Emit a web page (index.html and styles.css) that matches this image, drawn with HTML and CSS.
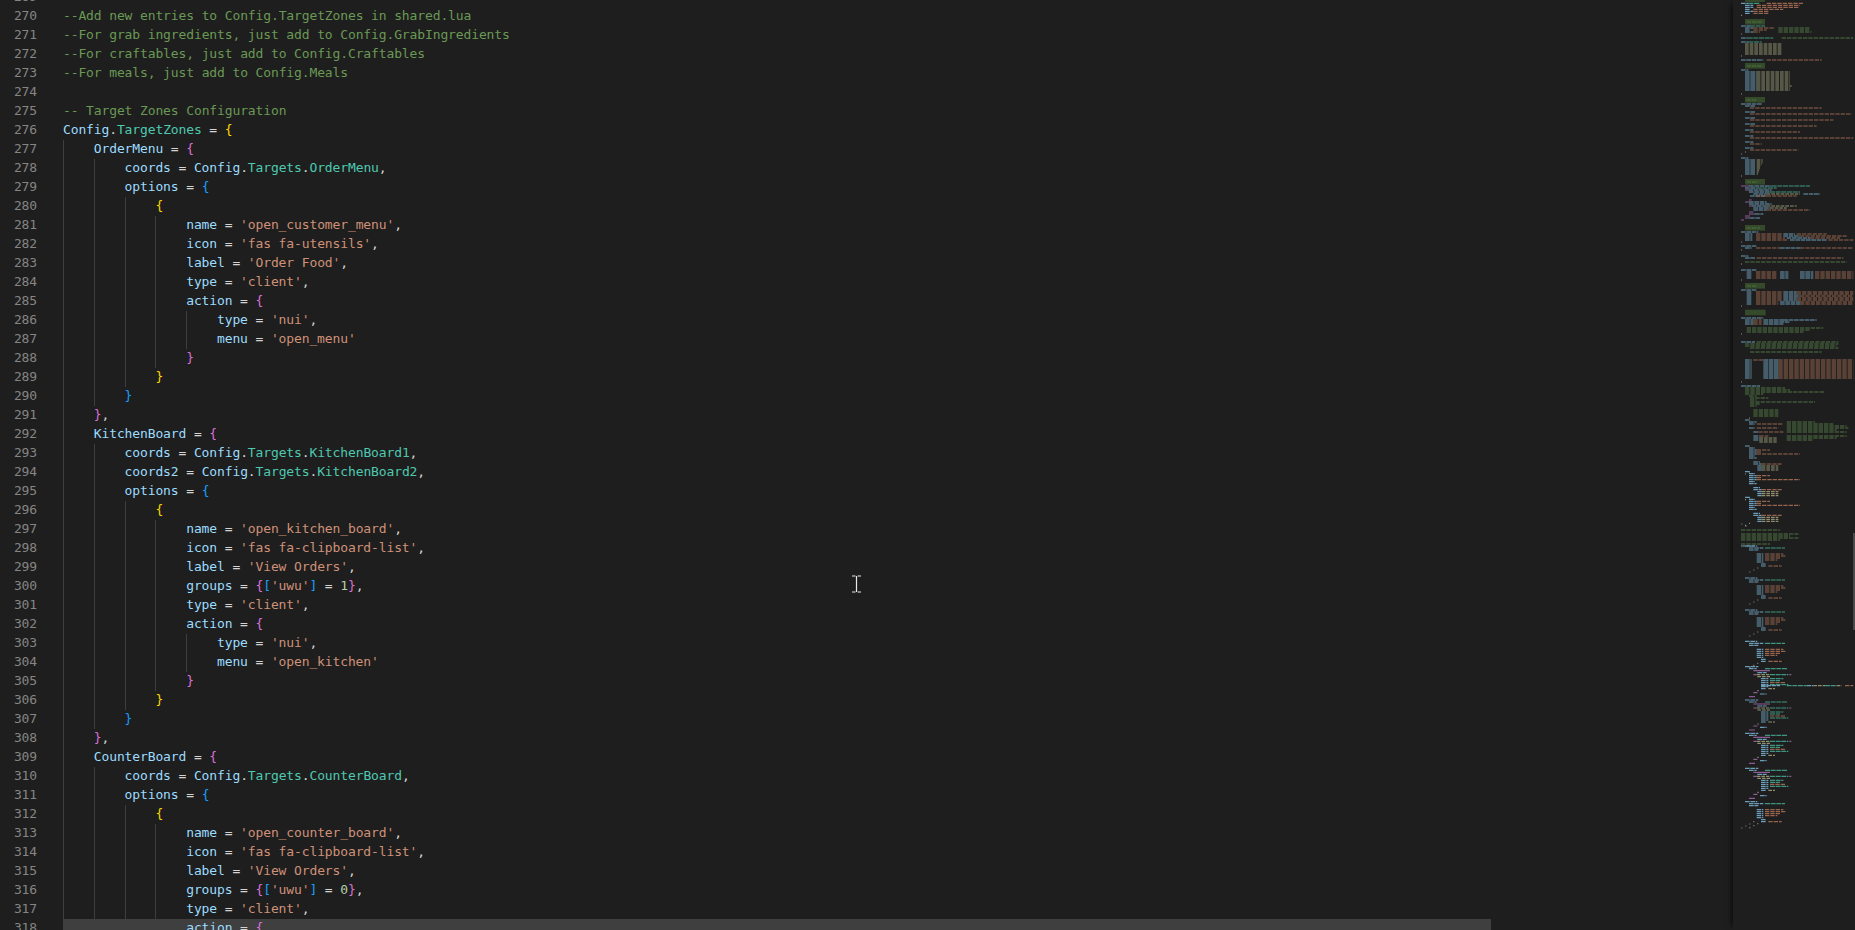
FILE: index.html
```html
<!DOCTYPE html>
<html lang="en">
<head>
<meta charset="utf-8">
<title>shared.lua</title>
<link rel="stylesheet" href="styles.css">
</head>
<body>
<div class="editor">
<main class="pane">
<div class="row"><span class="ln">269</span><span class="code"></span></div>
<div class="row"><span class="ln">270</span><span class="code"><span class="c">--Add new entries to Config.TargetZones in shared.lua</span></span></div>
<div class="row"><span class="ln">271</span><span class="code"><span class="c">--For grab ingredients, just add to Config.GrabIngredients</span></span></div>
<div class="row"><span class="ln">272</span><span class="code"><span class="c">--For craftables, just add to Config.Craftables</span></span></div>
<div class="row"><span class="ln">273</span><span class="code"><span class="c">--For meals, just add to Config.Meals</span></span></div>
<div class="row"><span class="ln">274</span><span class="code"></span></div>
<div class="row"><span class="ln">275</span><span class="code"><span class="c">-- Target Zones Configuration</span></span></div>
<div class="row"><span class="ln">276</span><span class="code"><span class="v">Config</span>.<span class="t">TargetZones</span> = <span class="by">{</span></span></div>
<div class="row"><span class="ln">277</span><span class="code"><i class="g"></i><span class="v">OrderMenu</span> = <span class="bp">{</span></span></div>
<div class="row"><span class="ln">278</span><span class="code"><i class="g"></i><i class="g"></i><span class="v">coords</span> = <span class="v">Config</span>.<span class="t">Targets</span>.<span class="t">OrderMenu</span>,</span></div>
<div class="row"><span class="ln">279</span><span class="code"><i class="g"></i><i class="g"></i><span class="v">options</span> = <span class="bb">{</span></span></div>
<div class="row"><span class="ln">280</span><span class="code"><i class="g"></i><i class="g"></i><i class="g"></i><span class="by">{</span></span></div>
<div class="row"><span class="ln">281</span><span class="code"><i class="g"></i><i class="g"></i><i class="g"></i><i class="g"></i><span class="v">name</span> = <span class="s">'open_customer_menu'</span>,</span></div>
<div class="row"><span class="ln">282</span><span class="code"><i class="g"></i><i class="g"></i><i class="g"></i><i class="g"></i><span class="v">icon</span> = <span class="s">'fas fa-utensils'</span>,</span></div>
<div class="row"><span class="ln">283</span><span class="code"><i class="g"></i><i class="g"></i><i class="g"></i><i class="g"></i><span class="v">label</span> = <span class="s">'Order Food'</span>,</span></div>
<div class="row"><span class="ln">284</span><span class="code"><i class="g"></i><i class="g"></i><i class="g"></i><i class="g"></i><span class="v">type</span> = <span class="s">'client'</span>,</span></div>
<div class="row"><span class="ln">285</span><span class="code"><i class="g"></i><i class="g"></i><i class="g"></i><i class="g"></i><span class="v">action</span> = <span class="bp">{</span></span></div>
<div class="row"><span class="ln">286</span><span class="code"><i class="g"></i><i class="g"></i><i class="g"></i><i class="g"></i><i class="g"></i><span class="v">type</span> = <span class="s">'nui'</span>,</span></div>
<div class="row"><span class="ln">287</span><span class="code"><i class="g"></i><i class="g"></i><i class="g"></i><i class="g"></i><i class="g"></i><span class="v">menu</span> = <span class="s">'open_menu'</span></span></div>
<div class="row"><span class="ln">288</span><span class="code"><i class="g"></i><i class="g"></i><i class="g"></i><i class="g"></i><span class="bp">}</span></span></div>
<div class="row"><span class="ln">289</span><span class="code"><i class="g"></i><i class="g"></i><i class="g"></i><span class="by">}</span></span></div>
<div class="row"><span class="ln">290</span><span class="code"><i class="g"></i><i class="g"></i><span class="bb">}</span></span></div>
<div class="row"><span class="ln">291</span><span class="code"><i class="g"></i><span class="bp">}</span>,</span></div>
<div class="row"><span class="ln">292</span><span class="code"><i class="g"></i><span class="v">KitchenBoard</span> = <span class="bp">{</span></span></div>
<div class="row"><span class="ln">293</span><span class="code"><i class="g"></i><i class="g"></i><span class="v">coords</span> = <span class="v">Config</span>.<span class="t">Targets</span>.<span class="t">KitchenBoard1</span>,</span></div>
<div class="row"><span class="ln">294</span><span class="code"><i class="g"></i><i class="g"></i><span class="v">coords2</span> = <span class="v">Config</span>.<span class="t">Targets</span>.<span class="t">KitchenBoard2</span>,</span></div>
<div class="row"><span class="ln">295</span><span class="code"><i class="g"></i><i class="g"></i><span class="v">options</span> = <span class="bb">{</span></span></div>
<div class="row"><span class="ln">296</span><span class="code"><i class="g"></i><i class="g"></i><i class="g"></i><span class="by">{</span></span></div>
<div class="row"><span class="ln">297</span><span class="code"><i class="g"></i><i class="g"></i><i class="g"></i><i class="g"></i><span class="v">name</span> = <span class="s">'open_kitchen_board'</span>,</span></div>
<div class="row"><span class="ln">298</span><span class="code"><i class="g"></i><i class="g"></i><i class="g"></i><i class="g"></i><span class="v">icon</span> = <span class="s">'fas fa-clipboard-list'</span>,</span></div>
<div class="row"><span class="ln">299</span><span class="code"><i class="g"></i><i class="g"></i><i class="g"></i><i class="g"></i><span class="v">label</span> = <span class="s">'View Orders'</span>,</span></div>
<div class="row"><span class="ln">300</span><span class="code"><i class="g"></i><i class="g"></i><i class="g"></i><i class="g"></i><span class="v">groups</span> = <span class="bp">{</span><span class="bb">[</span><span class="s">'uwu'</span><span class="bb">]</span> = <span class="n">1</span><span class="bp">}</span>,</span></div>
<div class="row"><span class="ln">301</span><span class="code"><i class="g"></i><i class="g"></i><i class="g"></i><i class="g"></i><span class="v">type</span> = <span class="s">'client'</span>,</span></div>
<div class="row"><span class="ln">302</span><span class="code"><i class="g"></i><i class="g"></i><i class="g"></i><i class="g"></i><span class="v">action</span> = <span class="bp">{</span></span></div>
<div class="row"><span class="ln">303</span><span class="code"><i class="g"></i><i class="g"></i><i class="g"></i><i class="g"></i><i class="g"></i><span class="v">type</span> = <span class="s">'nui'</span>,</span></div>
<div class="row"><span class="ln">304</span><span class="code"><i class="g"></i><i class="g"></i><i class="g"></i><i class="g"></i><i class="g"></i><span class="v">menu</span> = <span class="s">'open_kitchen'</span></span></div>
<div class="row"><span class="ln">305</span><span class="code"><i class="g"></i><i class="g"></i><i class="g"></i><i class="g"></i><span class="bp">}</span></span></div>
<div class="row"><span class="ln">306</span><span class="code"><i class="g"></i><i class="g"></i><i class="g"></i><span class="by">}</span></span></div>
<div class="row"><span class="ln">307</span><span class="code"><i class="g"></i><i class="g"></i><span class="bb">}</span></span></div>
<div class="row"><span class="ln">308</span><span class="code"><i class="g"></i><span class="bp">}</span>,</span></div>
<div class="row"><span class="ln">309</span><span class="code"><i class="g"></i><span class="v">CounterBoard</span> = <span class="bp">{</span></span></div>
<div class="row"><span class="ln">310</span><span class="code"><i class="g"></i><i class="g"></i><span class="v">coords</span> = <span class="v">Config</span>.<span class="t">Targets</span>.<span class="t">CounterBoard</span>,</span></div>
<div class="row"><span class="ln">311</span><span class="code"><i class="g"></i><i class="g"></i><span class="v">options</span> = <span class="bb">{</span></span></div>
<div class="row"><span class="ln">312</span><span class="code"><i class="g"></i><i class="g"></i><i class="g"></i><span class="by">{</span></span></div>
<div class="row"><span class="ln">313</span><span class="code"><i class="g"></i><i class="g"></i><i class="g"></i><i class="g"></i><span class="v">name</span> = <span class="s">'open_counter_board'</span>,</span></div>
<div class="row"><span class="ln">314</span><span class="code"><i class="g"></i><i class="g"></i><i class="g"></i><i class="g"></i><span class="v">icon</span> = <span class="s">'fas fa-clipboard-list'</span>,</span></div>
<div class="row"><span class="ln">315</span><span class="code"><i class="g"></i><i class="g"></i><i class="g"></i><i class="g"></i><span class="v">label</span> = <span class="s">'View Orders'</span>,</span></div>
<div class="row"><span class="ln">316</span><span class="code"><i class="g"></i><i class="g"></i><i class="g"></i><i class="g"></i><span class="v">groups</span> = <span class="bp">{</span><span class="bb">[</span><span class="s">'uwu'</span><span class="bb">]</span> = <span class="n">0</span><span class="bp">}</span>,</span></div>
<div class="row"><span class="ln">317</span><span class="code"><i class="g"></i><i class="g"></i><i class="g"></i><i class="g"></i><span class="v">type</span> = <span class="s">'client'</span>,</span></div>
<div class="row"><span class="ln">318</span><span class="code hl"><i class="g"></i><i class="g"></i><i class="g"></i><i class="g"></i><span class="v">action</span> = <span class="bp">{</span></span></div>
</main>
<aside class="minimap">
<svg class="mini-svg" viewBox="99 0 366 2790" width="122" height="930" aria-hidden="true">
<defs>
<g id="zone" fill="none" stroke-width="3.6">
<path class="mb" d="M135 0H172M147 6H190M147 12H175M170 24H190M170 30H190M170 36H190M170 42H190M170 48H190M183 54H197M183 60H197"/>
<path class="mt" d="M195 6H255"/>
<path class="mo" d="M195 24H250M195 30H258M195 36H240M195 42H232M205 60H245"/>
<path class="mw" d="M172 66H175M160 72H163M148 78H151"/>
</g>
<g id="act" fill="none" stroke-width="3.6">
<path class="mb" d="M135 0H150M147 6H165M147 12H170M147 18H170M147 24H170M147 30H165M147 36H170M160 48H180M160 54H185M172 60H185M172 66H185M172 72H185"/>
<path class="mo" d="M170 12H210M170 18H185M170 24H300M185 54H245"/>
<path class="my" d="M185 60H235M185 66H235M185 72H235"/>
<path class="mw" d="M147 78H150M135 84H138"/>
</g>
<g id="cook" fill="none" stroke-width="3.6">
<path class="mb" d="M135 0H175M147 6H170M172 18H200M183 36H205M183 42H205M183 48H205M183 54H205M183 60H205M183 66H198M180 82H200"/>
<path class="mt" d="M195 6H262M210 24H265M210 36H250M210 42H240M210 54H265"/>
<path class="mp" d="M160 12H210M160 24H170M268 24H274M160 78H172M147 90H165"/>
<path class="my" d="M172 30H210M170 24H208M205 66H225"/>
<path class="mo" d="M210 48H258"/>
<path class="mw" d="M172 72H176"/>
</g>
</defs>
<g class="boxes">
<rect x="135" y="-3" width="60" height="9"/><rect x="135" y="57" width="60" height="17"/><rect x="135" y="189" width="60" height="17"/><rect x="135" y="291" width="60" height="17"/><rect x="135" y="537" width="60" height="17"/><rect x="135" y="675" width="60" height="17"/><rect x="135" y="849" width="60" height="17"/><rect x="135" y="929" width="62" height="17"/>
</g>
<g fill="none" stroke-width="3.6">
<path class="mg" d="M140 66H185M140 198H185M140 300H172M140 546H175M140 684H180M140 858H170M235 84H330M235 90H330M235 96H335M245 114H460M135 786H440M140 984H370M140 990H330M140 996H310M170 1026H415M135 1032H415M135 1038H410M150 1044H415M150 1056H365M135 1164H255M135 1170H270M135 1176H375M135 1182H190M147 1188H170M150 1194H205M150 1200H170M150 1206H345M150 1212H180M150 1218H170M160 1230H235M160 1236H235M160 1242H235M160 1248H235M260 1266H345M260 1272H400M260 1278H440M260 1284H445M260 1290H410M260 1296H440M260 1308H440M260 1314H410M260 1320H340M123 1590H240M123 1602H295M123 1608H270M123 1614H295M123 1620H240M123 1632H210"/>
<path class="mb" d="M123 10H145M135 16H160M135 22H160M135 28H150M135 34H160M135 40H150M123 78H150M135 84H160M135 90H150M135 96H160M123 114H143M123 126H145M123 180H190M123 210H145M135 216H170M135 222H170M135 228H170M135 234H170M135 240H170M135 246H170M135 252H170M135 258H170M135 264H170M135 270H170M123 312H185M135 318H165M135 336H165M135 354H165M135 372H165M135 390H160M135 408H160M135 426H160M135 444H160M123 474H145M135 480H165M135 486H165M135 492H165M135 498H165M135 504H165M135 510H165M135 516H165M135 522H165M147 558H215M135 564H170M145 570H215M147 576H210M160 582H200M310 582H360M150 588H200M147 606H200M147 612H215M155 618H200M160 624H210M160 630H200M165 642H190M150 654H180M123 696H175M135 702H157M250 702H285M135 708H157M250 708H300M135 714H157M260 714H330M135 720H157M270 720H380M123 738H170M135 744H155M240 744H300M123 768H145M135 774H165M123 810H170M140 816H155M240 816H265M300 816H340M140 822H155M240 822H265M300 822H340M140 828H155M240 828H265M300 828H340M140 834H155M240 834H265M300 834H340M123 870H170M140 876H155M250 876H290M140 882H155M250 882H290M140 888H155M250 888H300M140 894H155M250 894H290M140 900H155M250 900H290M140 906H155M240 906H300M140 912H155M240 912H300M123 954H190M135 960H160M135 966H160M135 972H160M190 960H250M190 966H270M190 972H250M250 960H350M123 1026H165M135 1080H155M190 1080H235M135 1086H155M190 1086H235M135 1092H155M190 1092H235M135 1098H155M190 1098H235M135 1104H155M190 1104H235M135 1110H155M190 1110H235M135 1116H155M190 1116H235M135 1122H155M190 1122H235M135 1128H155M190 1128H235M135 1134H155M190 1134H235M123 1158H180M135 1260H150M147 1272H165M147 1284H165M160 1296H175M147 1266H170M160 1308H178M160 1314H178M160 1320H178M123 1638H165"/>
<path class="mt" d="M145 10H180M150 78H195M143 114H220M145 126H185M215 558H330M170 564H230M210 576H300"/>
<path class="mo" d="M200 10H310M170 16H300M170 22H295M160 28H250M160 34H205M160 40H205M160 84H225M160 90H200M160 96H180M200 180H365M150 324H365M150 342H455M150 360H400M150 378H350M150 396H300M150 414H460M150 432H185M150 450H295M168 588H290M200 630H330M168 702H245M290 702H380M168 708H245M300 708H440M168 714H255M330 714H420M168 720H265M385 720H460M168 744H240M300 744H460M170 774H430M168 816H230M345 816H460M168 822H230M345 822H460M168 828H230M345 828H460M168 834H230M345 834H460M168 876H245M290 876H460M168 882H245M290 882H460M168 888H245M300 888H460M168 894H245M290 894H460M168 900H245M290 900H460M168 906H235M300 906H460M168 912H235M300 912H460M160 966H185M160 960H185M160 972H185M160 1080H190M235 1080H460M235 1086H460M235 1092H460M235 1098H460M235 1104H460M235 1110H460M235 1116H460M235 1122H460M235 1128H460M235 1134H460M170 1272H250M170 1284H235M175 1296H250M178 1308H205"/>
<path class="my" d="M135 132H245M135 138H245M135 144H245M135 150H245M135 156H245M135 162H245M170 216H270M170 222H270M170 228H270M170 234H270M170 240H270M170 246H270M170 252H270M170 258H275M170 264H270M170 270H270M170 480H188M170 486H188M170 492H186M170 498H184M170 504H180M170 510H178M170 516H176M170 522H174M200 582H300M200 618H290M210 624H260M178 1314H230M178 1320H230M178 1326H230"/>
<path class="mp" d="M123 558H147M135 570H145M147 600H155M135 606H147M147 618H155M147 636H160M147 642H165M135 648H150M135 654H150M123 660H132"/>
<path class="mw" d="M123 46H126M123 102H126M123 168H126M123 282H126M135 456H138M123 462H126M123 528H126M123 726H126M123 750H126M123 792H126M123 840H126M123 918H126M123 1002H126M123 1146H126M147 1254H150M124 1572H127M135 1578H140"/>
</g>
<use href="#act" y="1338"/>
<use href="#act" y="1415"/>
<use href="#act" y="1492"/>
<use href="#zone" y="1638"/>
<use href="#zone" y="1734"/>
<use href="#zone" y="1830"/>
<use href="#zone" y="1924"/>
<use href="#cook" y="2000"/>
<use href="#cook" y="2100"/>
<use href="#cook" y="2200"/>
<use href="#cook" y="2305"/>
<use href="#zone" y="2405"/>
<g fill="none" stroke-width="3.6">
<path class="mb" d="M183 2057H240M320 2057H340"/>
<path class="mt" d="M260 2057H320M375 2057H410"/>
<path class="my" d="M340 2057H375M410 2057H425"/>
<path class="mo" d="M435 2057H460"/>
<path class="mw" d="M160 2465H163M148 2472H151M136 2478H139M124 2484H127"/>
</g>
</svg>
<div class="slider"></div>
</aside>
</div>
<svg class="ibeam" width="11" height="18" viewBox="0 0 11 18" aria-hidden="true"><path d="M1 1H4.500M6.500 1H10M5.500 1V17M1 17H4.500M6.500 17H10" fill="none" stroke="#e8e8e8" stroke-width="1.200"/></svg>
</body>
</html>
```
FILE: styles.css
```css
html, body {
  margin: 0;
  height: 100%;
  overflow: hidden;
  background: #1e1e1e;
}

.editor {
  display: flex;
  height: 930px;
  overflow: hidden;
}

.pane {
  flex: 1;
  min-width: 0;
  margin-top: -12px;
  font-family: "DejaVu Sans Mono", monospace;
  font-size: 13px;
  line-height: 17px;
  letter-spacing: -0.125px;
  color: #d4d4d4;
}

.row {
  display: flex;
  height: 19px;
}

.ln {
  width: 37px;
  margin-right: 26px;
  text-align: right;
  color: #858585;
  flex: none;
}

.code {
  flex: none;
  width: 1428px;
  height: 19px;
  white-space: pre;
}

.hl {
  background: #3f3f3f;
}

.g {
  display: inline-block;
  width: 30.8px;
  height: 19px;
  vertical-align: top;
  box-sizing: border-box;
  border-left: 1px solid #3e3e3e;
}

.c { color: #6a9955; }
.v { color: #9cdcfe; }
.t { color: #4ec9b0; }
.s { color: #ce9178; }
.n { color: #b5cea8; }
.by { color: #ffd700; }
.bp { color: #da70d6; }
.bb { color: #179fff; }

.minimap {
  position: relative;
  flex: none;
  width: 122px;
  height: 930px;
  background: #1e1e1e;
  box-shadow: -5px 0 6px -4px rgba(0, 0, 0, 0.75);
}

.mini-svg {
  display: block;
}

.boxes rect { fill: #35492b; }
.mb { stroke: #6c9cb8; stroke-dasharray: 14 2; }
.mo { stroke: #96644f; stroke-dasharray: 13 3; }
.mg { stroke: #4f7340; stroke-dasharray: 13 3; }
.mt { stroke: #3f9580; stroke-dasharray: 15 2; }
.my { stroke: #8f8f70; stroke-dasharray: 11 3; }
.mp { stroke: #8c5a94; }
.mw { stroke: #8a8a8a; }

.slider {
  position: absolute;
  right: 0;
  top: 533px;
  width: 2px;
  height: 97px;
  background: #4a4a4a;
}

.ibeam {
  position: absolute;
  left: 851px;
  top: 575px;
}
```
